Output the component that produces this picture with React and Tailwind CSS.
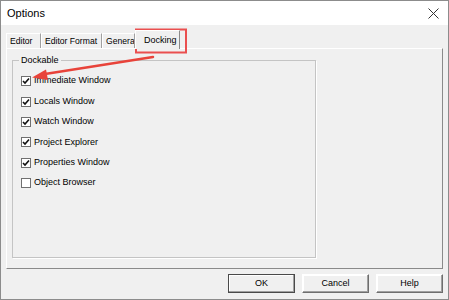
import React from "react";

const items = [
    { label: "Immediate Window", checked: true },
    { label: "Locals Window", checked: true },
    { label: "Watch Window", checked: true },
    { label: "Project Explorer", checked: true },
    { label: "Properties Window", checked: true },
    { label: "Object Browser", checked: false },
];

const tabs = [
    { label: "Editor", width: "w-[35px]" },
    { label: "Editor Format", width: "w-[61px]" },
    { label: "General", width: "w-[33px]" },
];

const CheckBox = ({ checked }) => (
    <span className="w-[10px] h-[10px] border border-[#707070] bg-white flex items-center justify-center">
        {checked && (
            <svg width="8" height="8" viewBox="0 0 8 8">
                <path d="M1 4 L3 6 L7 1.5" fill="none" stroke="#111" strokeWidth="1.6" />
            </svg>
        )}
    </span>
);

const Button = ({ label, isDefault }) => (
    <button
        className={
            "w-[67px] h-[19px] text-[9px] text-black bg-[#f0f0f0] border shadow-[inset_-1px_-1px_0_#a0a0a0,inset_1px_1px_0_#ffffff] " +
            (isDefault ? "border-[#4a4a4a]" : "border-t-white border-l-white border-r-[#6e6e6e] border-b-[#6e6e6e]")
        }
    >
        {label}
    </button>
);

export default function App() {
    return (
        <div
            className="relative w-[449px] h-[300px] border border-[#8c8c8c] bg-[#f0f0f0] flex flex-col overflow-hidden"
            style={{ fontFamily: '"Liberation Sans", Arial, sans-serif' }}
        >
            {/* Title bar */}
            <div className="h-[24px] bg-white flex items-center justify-between pl-[6px] pr-[9px]">
                <span className="text-[11px] text-black">Options</span>
                <svg width="11" height="11" viewBox="0 0 11 11">
                    <path d="M0.5 0.5 L10.5 10.5 M10.5 0.5 L0.5 10.5" stroke="#333" strokeWidth="1" />
                </svg>
            </div>

            {/* Tabs */}
            <div className="h-[23px] flex items-end pl-[5px]">
                {tabs.map((tab) => (
                    <div
                        key={tab.label}
                        className={`${tab.width} h-[15px] border-t border-l border-r border-t-white border-l-white border-r-[#a0a0a0] text-[8.6px] text-black leading-[14px] pl-[3px] overflow-hidden whitespace-nowrap`}
                    >
                        {tab.label}
                    </div>
                ))}
                <div className="w-[45px] h-[19px] border-t border-l border-r border-t-white border-l-white border-r-[#8a8a8a] text-[9px] text-black leading-[18px] pl-[8px] bg-[#f0f0f0] -mb-px z-10">
                    Docking
                </div>
            </div>

            {/* Tab panel */}
            <div className="ml-[5px] w-[437px] h-[221px] border border-t-white border-l-white border-r-[#8a8a8a] border-b-[#8a8a8a] pt-[11px] pl-[5px]">
                <div className="relative w-[304px] h-[198px] border border-[#c4c4c4] shadow-[1px_1px_0_#ffffff] pt-[10px] pl-[8px] flex flex-col">
                    <span className="absolute -top-[6px] left-[6px] px-[2px] bg-[#f0f0f0] text-[9px] leading-[10px] text-black">
                        Dockable
                    </span>
                    {items.map((item) => (
                        <div key={item.label} className="h-[20.4px] flex items-center gap-[3px]">
                            <CheckBox checked={item.checked} />
                            <span className="text-[9px] text-black">{item.label}</span>
                        </div>
                    ))}
                </div>
            </div>

            {/* Buttons */}
            <div className="mt-[5px] flex justify-end gap-[7px] pr-[5px]">
                <Button label="OK" isDefault />
                <Button label="Cancel" />
                <Button label="Help" />
            </div>

            {/* Annotation overlay */}
            <svg className="absolute left-0 top-0 pointer-events-none" width="449" height="300" viewBox="0 0 449 300">
                <rect x="135" y="28.5" width="50" height="23" fill="none" stroke="#ea4f4f" strokeWidth="2" />
                <path d="M152 56 L44 73" stroke="#e8433a" strokeWidth="2.5" strokeLinecap="round" />
                <path d="M31 76.5 L45 68.5 L47 79 Z" fill="#e8433a" />
            </svg>
        </div>
    );
}
